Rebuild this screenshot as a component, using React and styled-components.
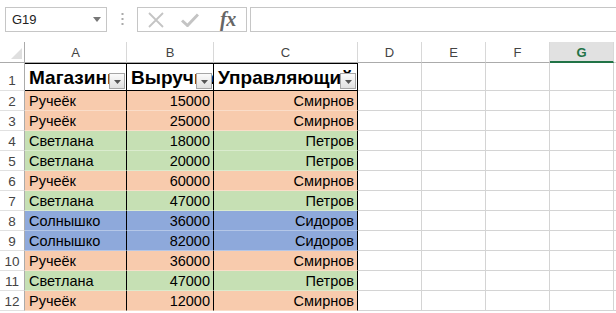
import React from "react";
import styled, { createGlobalStyle, css } from "styled-components";

const Global = createGlobalStyle`
  html, body { margin: 0; padding: 0; background: #fff; }
  body { font-family: "Liberation Sans", Arial, sans-serif; overflow: hidden; }
  * { box-sizing: border-box; }
`;

const Page = styled.div`
  width: 616px;
  height: 313px;
  background: #fff;
  overflow: hidden;
`;

const FormulaBar = styled.div`
  display: flex;
  align-items: center;
  height: 42px;
  padding: 7px 0 10px 5px;
`;

const NameBox = styled.div`
  width: 102px;
  height: 25px;
  border: 1px solid #c6c6c6;
  display: flex;
  align-items: center;
  justify-content: space-between;
  padding: 0 5px 0 6px;
  font-size: 13px;
  color: #222;
`;

const Dots = styled.div`
  width: 30px;
  display: flex;
  justify-content: center;
`;

const FxBox = styled.div`
  width: 110px;
  height: 25px;
  border: 1px solid #c6c6c6;
  display: flex;
  align-items: center;
  padding-left: 10px;
`;

const FxText = styled.span`
  font-family: "Liberation Serif", serif;
  font-style: italic;
  font-weight: bold;
  font-size: 20px;
  color: #666;
  margin-left: 21px;
  letter-spacing: -0.5px;
`;

const Input = styled.div`
  flex: 1;
  height: 25px;
  margin-left: 3px;
  border-top: 1px solid #c6c6c6;
  border-bottom: 1px solid #c6c6c6;
  border-left: 1px solid #c6c6c6;
`;

const Grid = styled.div`
  display: grid;
  grid-template-columns: 25px 102px 87px 144px 64px 64px 64px 64px 2px;
  grid-template-rows: 21px 28px repeat(12, 20px);
`;

const ColHead = styled.div`
  display: flex;
  align-items: center;
  justify-content: center;
  font-size: 13px;
  color: #444;
  border-bottom: 1px solid #ababab;
  border-right: 1px solid #d8d8d8;
  ${(p) =>
    p.$selected &&
    css`
      background: #e1e1e1;
      color: #217346;
      font-weight: bold;
      border-bottom: 2px solid #217346;
      padding-top: 1px;
    `}
`;

const Corner = styled.div`
  border-bottom: 1px solid #ababab;
  border-right: 1px solid #ababab;
  display: flex;
  align-items: flex-end;
  justify-content: flex-end;
  padding: 0 2px 3px 0;
`;

const RowHead = styled.div`
  display: flex;
  align-items: center;
  justify-content: center;
  font-size: 13.5px;
  color: #444;
  border-right: 1px solid #ababab;
  border-bottom: 1px solid #e1e1e1;
  padding-top: ${(p) => (p.$tall ? "7px" : "1px")};
`;

const fills = {
  o: "#f8cbad",
  g: "#c6e0b4",
  b: "#8ea9db",
};

const Cell = styled.div`
  display: flex;
  align-items: center;
  justify-content: ${(p) => (p.$right ? "flex-end" : "flex-start")};
  padding: 1px 3px 0 4px;
  font-size: 14.5px;
  color: #000;
  background: ${(p) => (p.$fill ? fills[p.$fill] : "#fff")};
  border-right: 1px solid ${(p) => (p.$edge ? "#000" : "#d4d4d4")};
  border-bottom: 1px solid ${(p) => (p.$fill ? "rgba(255,255,255,0.35)" : "#d4d4d4")};
  white-space: nowrap;
  overflow: hidden;
`;

const HeadCell = styled.div`
  position: relative;
  display: flex;
  align-items: flex-end;
  padding: 0 0 1px 4px;
  font-size: 19px;
  font-weight: bold;
  color: #000;
  background: #fff;
  border-top: 1px solid #000;
  border-bottom: 1px solid #000;
  border-right: 1px solid ${(p) => (p.$edge ? "#000" : "#d4d4d4")};
  white-space: nowrap;
  overflow: hidden;
`;

const HeadCellPlain = styled.div`
  border-right: 1px solid #d4d4d4;
  border-bottom: 1px solid #d4d4d4;
`;

const FilterBtn = styled.div`
  position: absolute;
  right: 1px;
  bottom: 1px;
  width: 16px;
  height: 16px;
  border: 1px solid #a6a6a6;
  background: linear-gradient(#fbfbfb, #e0e0e0);
  display: flex;
  align-items: center;
  justify-content: center;
  padding-top: 2px;
`;

const Spacer = styled.div`
  border-bottom: 1px solid #d4d4d4;
`;

const Arrow = () => (
  <svg width="7" height="4" viewBox="0 0 7 4">
    <path d="M0 0 H7 L3.5 4 Z" fill="#555" />
  </svg>
);

const data = [
  ["Ручеёк", 15000, "Смирнов", "o"],
  ["Ручеёк", 25000, "Смирнов", "o"],
  ["Светлана", 18000, "Петров", "g"],
  ["Светлана", 20000, "Петров", "g"],
  ["Ручеёк", 60000, "Смирнов", "o"],
  ["Светлана", 47000, "Петров", "g"],
  ["Солнышко", 36000, "Сидоров", "b"],
  ["Солнышко", 82000, "Сидоров", "b"],
  ["Ручеёк", 36000, "Смирнов", "o"],
  ["Светлана", 47000, "Петров", "g"],
  ["Ручеёк", 12000, "Смирнов", "o"],
];

const cols = ["A", "B", "C", "D", "E", "F", "G"];

export default function App() {
  return (
    <Page>
      <Global />
      <FormulaBar>
        <NameBox>
          <span>G19</span>
          <svg width="8" height="5" viewBox="0 0 8 5">
            <path d="M0 0 H8 L4 5 Z" fill="#777" />
          </svg>
        </NameBox>
        <Dots>
          <svg width="3" height="13" viewBox="0 0 3 13">
            <rect x="0.5" y="0" width="2" height="2" fill="#aaa" />
            <rect x="0.5" y="5" width="2" height="2" fill="#aaa" />
            <rect x="0.5" y="10" width="2" height="2" fill="#aaa" />
          </svg>
        </Dots>
        <FxBox>
          <svg width="16" height="16" viewBox="0 0 16 16">
            <path d="M1 1 L15 15 M15 1 L1 15" stroke="#c4c4c4" strokeWidth="1.8" />
          </svg>
          <svg width="18" height="14" viewBox="0 0 18 14" style={{ marginLeft: 17 }}>
            <path d="M1 7.5 L6.5 12.5 L17 1.5" stroke="#c4c4c4" strokeWidth="3" fill="none" />
          </svg>
          <FxText>fx</FxText>
        </FxBox>
        <Input />
      </FormulaBar>
      <Grid>
        <Corner>
          <svg width="11" height="11" viewBox="0 0 11 11">
            <path d="M11 0 V11 H0 Z" fill="#dfdfdf" />
          </svg>
        </Corner>
        {cols.map((c) => (
          <ColHead key={c} $selected={c === "G"}>
            {c}
          </ColHead>
        ))}
        <Spacer />

        <RowHead $tall>1</RowHead>
        <HeadCell $edge>
          Магазины
          <FilterBtn><Arrow /></FilterBtn>
        </HeadCell>
        <HeadCell $edge>
          Выручка
          <FilterBtn><Arrow /></FilterBtn>
        </HeadCell>
        <HeadCell $edge>
          Управляющий
          <FilterBtn><Arrow /></FilterBtn>
        </HeadCell>
        <HeadCellPlain />
        <HeadCellPlain />
        <HeadCellPlain />
        <HeadCellPlain />
        <Spacer />

        {data.map(([shop, sum, mgr, fill], i) => (
          <React.Fragment key={i}>
            <RowHead>{i + 2}</RowHead>
            <Cell $fill={fill} $edge>{shop}</Cell>
            <Cell $fill={fill} $edge $right>{sum}</Cell>
            <Cell $fill={fill} $edge $right>{mgr}</Cell>
            <Cell />
            <Cell />
            <Cell />
            <Cell />
            <Spacer />
          </React.Fragment>
        ))}
      </Grid>
    </Page>
  );
}
